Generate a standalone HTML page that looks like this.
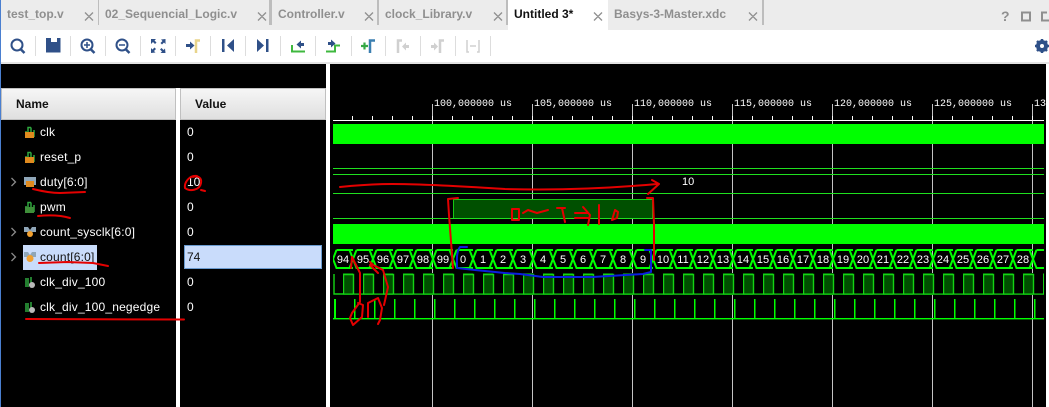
<!DOCTYPE html>
<html><head><meta charset="utf-8"><style>
html,body{margin:0;padding:0;background:#000;width:1049px;height:407px;overflow:hidden}
svg{display:block}
.tab{font:bold 12px "Liberation Sans",sans-serif;fill:#8f8f8f}
.sig{font:12px "Liberation Sans",sans-serif;fill:#fff;letter-spacing:.18px}
.val{font:12px "Liberation Sans",sans-serif;fill:#fff}
.hd{font:bold 12px "Liberation Sans",sans-serif;fill:#111}
.rul{font:10px "Liberation Mono",monospace;fill:#fff}
.c{font:11px "Liberation Sans",sans-serif;fill:#fff;text-anchor:middle}
.x{stroke:#8f8f8f;stroke-width:1.3;fill:none}
.r{fill:none;stroke:#e40000;stroke-width:2;stroke-linecap:round;stroke-linejoin:round}
</style></head><body>
<svg width="1049" height="407" viewBox="0 0 1049 407" xmlns="http://www.w3.org/2000/svg">
<defs>
<linearGradient id="h" x1="0" y1="0" x2="0" y2="1"><stop offset="0" stop-color="#f6f6f6"/><stop offset="1" stop-color="#dfdfdf"/></linearGradient>
<pattern id="hex" patternUnits="userSpaceOnUse" x="333" y="247" width="20" height="24">
<path d="M3.500 3H16.500L23.500 21M-3.500 3L3.500 21H16.500L23.500 3M-3.500 21L3.500 3M16.500 21H23.500M16.500 3H23.500" fill="none" stroke="#0f0" stroke-width="2"/>
</pattern>
<pattern id="clkp" patternUnits="userSpaceOnUse" x="343" y="273" width="20" height="22">
<rect x="0" y="0" width="10" height="22" fill="#004f00"/>
<path d="M.5 21.500V1.500H10.500V21.500" fill="none" stroke="#14d414" stroke-width="1.400"/>
<rect x="0" y="20.500" width="20" height="1.200" fill="#14e014"/>
</pattern>
</defs>

<!-- chrome -->
<rect x="0" y="0" width="1049" height="30" fill="#ececec"/>
<rect x="0" y="30" width="1049" height="32" fill="#fff"/>
<rect x="0" y="62" width="1049" height="2" fill="#e4e4e4"/>
<rect x="508" y="0" width="100" height="30" fill="#fff"/>
<rect x="98" y="0" width="1" height="25" fill="#bdbdbd"/>
<rect x="269" y="0" width="3" height="25" fill="#bdbdbd"/>
<rect x="377" y="0" width="2" height="25" fill="#bdbdbd"/>
<rect x="506" y="0" width="2" height="25" fill="#bdbdbd"/>
<rect x="762" y="0" width="2" height="25" fill="#bdbdbd"/>

<text class="tab" x="7" y="18">test_top.v</text>
<text class="tab" x="105" y="18">02_Sequencial_Logic.v</text>
<text class="tab" x="278" y="18">Controller.v</text>
<text class="tab" x="385" y="18">clock_Library.v</text>
<text class="tab" x="514" y="18" style="fill:#111">Untitled 3*</text>
<text class="tab" x="614" y="18">Basys-3-Master.xdc</text>
<path class="x" d="M85 12.500l8 8m0-8l-8 8M258 12.500l8 8m0-8l-8 8M365 12.500l8 8m0-8l-8 8M494 12.500l8 8m0-8l-8 8M594 12.500l8 8m0-8l-8 8M749 12.500l8 8m0-8l-8 8"/>

<text x="1001" y="21" style="font:bold 14px 'Liberation Sans',sans-serif;fill:#8f8f8f">?</text>
<rect x="1022" y="12.500" width="8" height="8" fill="none" stroke="#8f8f8f" stroke-width="2"/>
<path d="M1047 12.500h-5v8h7" fill="none" stroke="#8f8f8f" stroke-width="2"/>

<!-- toolbar separators -->
<path d="M35.500 36v20M70.500 36v20M105.500 36v20M140.500 36v20M175.500 36v20M210.500 36v20M245.500 36v20M280.500 36v20M315.500 36v20M351.500 36v20M385.500 36v20M420.500 36v20M455.500 36v20M490.500 36v20" stroke="#ddd" stroke-width="1"/>

<!-- toolbar icons -->
<g fill="none" stroke="#2f5088" stroke-width="2">
<circle cx="17" cy="45" r="5.500"/><path d="M21 49.500l3.500 3.500" stroke-width="2.500"/>
<circle cx="87" cy="45" r="5.500"/><path d="M91 49.500l3.500 3.500" stroke-width="2.500"/><path d="M84 45h6M87 42v6" stroke-width="1.500"/>
<circle cx="122" cy="45" r="5.500"/><path d="M126 49.500l3.500 3.500" stroke-width="2.500"/><path d="M119 45h6" stroke-width="1.500"/>
</g>
<path d="M46 38h14.500v14.500H46zM51 38v4h6v-4z" fill="#2f5088" fill-rule="evenodd"/>
<path d="M151 39h5l-1.500 1.500 2 2-1.500 1.500-2-2-2 2zM165.500 39v5l-1.500-1.500-2 2-1.500-1.500 2-2-1.500-1.500zM151 53v-5l1.500 1.500 2-2 1.500 1.500-2 2 1.500 1.500zM165.500 53h-5l1.500-1.500-2-2 1.500-1.500 2 2 1.500-1.500z" fill="#2f5088"/>
<path d="M186 44h4v-2.500l4.500 4-4.500 4V47h-4z" fill="#2f5088"/>
<path d="M196 53V40.500h4" fill="none" stroke="#e8d48a" stroke-width="2.500"/>
<rect x="222" y="39" width="2.500" height="13" fill="#2f5088"/><path d="M234 39v13l-7-6.500z" fill="#2f5088"/>
<rect x="266" y="39" width="2.500" height="13" fill="#2f5088"/><path d="M257 39v13l7-6.500z" fill="#2f5088"/>
<path d="M292 45v6.500h13" fill="none" stroke="#3fb83f" stroke-width="2"/><path d="M304 43h-3v-2.500l-4.500 4 4.500 4V46h3z" fill="#2f5088"/>
<path d="M326 51.500h9v-6h5" fill="none" stroke="#3fb83f" stroke-width="2"/><path d="M328 42h3v-2.500l4.500 4-4.500 4V45h-3z" fill="#2f5088"/>
<path d="M361 46h7M364.500 42.500v7" fill="none" stroke="#35a845" stroke-width="2.200"/>
<path d="M370 53V40.500h5" fill="none" stroke="#3b7fb0" stroke-width="2.500"/>
<path d="M398 53V40.500h4" fill="none" stroke="#d0d0d0" stroke-width="2.500"/><path d="M409 45h-3v-2.500l-4 4 4 4V48h3z" fill="#d0d0d0"/>
<path d="M431 45h3v-2.500l4 4-4 4V48h-3z" fill="#d0d0d0"/><path d="M440 53V40.500h4" fill="none" stroke="#d0d0d0" stroke-width="2.500"/>
<path d="M467 40v12h2M479 40v12h-2M470 46h6" fill="none" stroke="#d0d0d0" stroke-width="1.500"/>
<circle cx="1042" cy="46" r="4.500" fill="none" stroke="#2f5088" stroke-width="3"/>
<path d="M1042 39v14M1035 46h14M1037 41l10 10M1047 41l-10 10" stroke="#2f5088" stroke-width="2.500"/>
<circle cx="1042" cy="46" r="2" fill="#fff"/>

<!-- panel gutters -->
<rect x="0" y="0" width="1" height="407" fill="#4a7fd0"/>
<rect x="176" y="88" width="4" height="319" fill="#fff"/>
<rect x="326" y="64" width="4" height="343" fill="#fff"/>
<rect x="1046" y="64" width="3" height="343" fill="#fff"/>

<!-- headers -->
<rect x="1.500" y="88.500" width="174" height="31" fill="url(#h)" stroke="#c0c0c0"/>
<rect x="180.500" y="88.500" width="145" height="31" fill="url(#h)" stroke="#c0c0c0"/>
<text class="hd" x="16" y="108">Name</text>
<text class="hd" x="195" y="108">Value</text>

<!-- highlight -->
<rect x="23" y="245" width="74" height="25" fill="#c9dcfb"/>
<rect x="184.500" y="245.500" width="137" height="23" fill="#c9dcfb" stroke="#6a9bd0"/>

<!-- signal icons -->
<g fill="none" stroke="#2fa83f" stroke-width="1.500">
<path d="M26 137v-6M31 127.500h-3v9M31 127.500v9M34 137v-7"/>
<path d="M26 162v-6M31 152.500h-3v9M31 152.500v9M34 162v-7"/>
<path d="M26 212v-6M31 202.500h-3v9M31 202.500v9M34 212v-7"/>
<path d="M26 287v-9M28 287v-9M31 277v9"/>
<path d="M26 312v-9M28 312v-9M31 302v9"/>
</g>
<rect x="25" y="132" width="9" height="6" fill="#e08a1e"/>
<rect x="25" y="157" width="9" height="6" fill="#e08a1e"/>
<rect x="25" y="207" width="9" height="6" fill="#3f8f3a"/>
<circle cx="32" cy="285" r="3" fill="#b9b9b9"/>
<circle cx="32" cy="310" r="3" fill="#b9b9b9"/>
<path d="M24 177h12v8h-12z" fill="#8fa6b8"/><rect x="26" y="181" width="8" height="6" fill="#e08a1e"/>
<path d="M24 227h4l2 3 2-3h4v5h-12z" fill="#8fa6b8"/><circle cx="30" cy="234" r="3" fill="#f0a030"/>
<path d="M24 252h4l2 3 2-3h4v5h-12z" fill="#8fa6b8"/><circle cx="30" cy="258.500" r="3.500" fill="#f0a030"/>
<path d="M11.500 178l4 4-4 4M11.500 228l4 4-4 4M11.500 253l4 4-4 4" fill="none" stroke="#8a8a8a" stroke-width="1.300"/>

<!-- names -->
<text class="sig" x="40" y="136">clk</text>
<text class="sig" x="40" y="161">reset_p</text>
<text class="sig" x="40" y="186">duty[6:0]</text>
<text class="sig" x="40" y="211">pwm</text>
<text class="sig" x="40" y="236">count_sysclk[6:0]</text>
<text class="sig" x="40" y="261" style="fill:#111">count[6:0]</text>
<text class="sig" x="40" y="286">clk_div_100</text>
<text class="sig" x="40" y="311">clk_div_100_negedge</text>

<!-- values -->
<text class="val" x="187" y="136">0</text>
<text class="val" x="187" y="161">0</text>
<text class="val" x="187" y="186">10</text>
<text class="val" x="187" y="211">0</text>
<text class="val" x="187" y="236">0</text>
<text class="val" x="187" y="261" style="fill:#111">74</text>
<text class="val" x="187" y="286">0</text>
<text class="val" x="187" y="311">0</text>

<!-- ruler -->
<path d="M432.500 104V407M532.500 104V407M632.500 104V407M732.500 104V407M832.500 104V407M932.500 104V407M1032.500 104V407" stroke="#c4c4c4" stroke-width="1"/>
<rect x="333" y="120" width="711" height="1" fill="#fff"/>
<line x1="352" y1="118" x2="1044" y2="118" stroke="#fff" stroke-width="4" stroke-dasharray="1 19"/>
<text class="rul" x="434" y="106">100,000000 us</text>
<text class="rul" x="534" y="106">105,000000 us</text>
<text class="rul" x="634" y="106">110,000000 us</text>
<text class="rul" x="734" y="106">115,000000 us</text>
<text class="rul" x="834" y="106">120,000000 us</text>
<text class="rul" x="934" y="106">125,000000 us</text>
<text class="rul" x="1034" y="106">13</text>

<!-- waves -->
<rect x="333" y="124" width="711" height="20" fill="#0f0"/>
<rect x="333" y="168" width="711" height="1" fill="#1fe01f"/>
<rect x="333" y="174" width="711" height="1" fill="#1fe01f"/>
<rect x="333" y="193" width="711" height="1" fill="#1fe01f"/>
<text x="682" y="185" style="font:11px 'Liberation Sans',sans-serif;fill:#fff">10</text>
<rect x="333" y="218" width="711" height="1" fill="#1fe01f"/>
<rect x="453" y="199" width="200" height="19" fill="#005000"/>
<path d="M453.500 218V199.500H652.500V218" fill="none" stroke="#14c814" stroke-width="1"/>
<rect x="333" y="224" width="711" height="20" fill="#0f0"/>
<rect x="333" y="247" width="711" height="24" fill="url(#hex)"/>
<rect x="343" y="273" width="701" height="22" fill="url(#clkp)"/>
<path d="M334 274V294H343" fill="none" stroke="#14d414" stroke-width="1.400"/>
<rect x="333" y="318" width="711" height="1.400" fill="#0f0"/>
<rect x="334" y="299" width="2" height="19" fill="#0f0"/>
<line x1="354" y1="308.500" x2="1044" y2="308.500" stroke="#0f0" stroke-width="19" stroke-dasharray="1.500 18.500"/>

<!-- count labels -->
<text class="c" x="343" y="263">94</text><text class="c" x="363" y="263">95</text><text class="c" x="383" y="263">96</text><text class="c" x="403" y="263">97</text><text class="c" x="423" y="263">98</text><text class="c" x="443" y="263">99</text>
<text class="c" x="463" y="263">0</text><text class="c" x="483" y="263">1</text><text class="c" x="503" y="263">2</text><text class="c" x="523" y="263">3</text><text class="c" x="543" y="263">4</text><text class="c" x="563" y="263">5</text><text class="c" x="583" y="263">6</text><text class="c" x="603" y="263">7</text><text class="c" x="623" y="263">8</text><text class="c" x="643" y="263">9</text>
<text class="c" x="663" y="263">10</text><text class="c" x="683" y="263">11</text><text class="c" x="703" y="263">12</text><text class="c" x="723" y="263">13</text><text class="c" x="743" y="263">14</text><text class="c" x="763" y="263">15</text><text class="c" x="783" y="263">16</text><text class="c" x="803" y="263">17</text><text class="c" x="823" y="263">18</text><text class="c" x="843" y="263">19</text><text class="c" x="863" y="263">20</text><text class="c" x="883" y="263">21</text><text class="c" x="903" y="263">22</text><text class="c" x="923" y="263">23</text><text class="c" x="943" y="263">24</text><text class="c" x="963" y="263">25</text><text class="c" x="983" y="263">26</text><text class="c" x="1003" y="263">27</text><text class="c" x="1023" y="263">28</text>

<!-- blue annotation -->
<path d="M467 247L460 247C456 252 457 262 457 268L475 270L505 273L520 274L543 277L593 277L643 274L651 272L651 250L645 250" fill="none" stroke="#0a1ee0" stroke-width="2" stroke-linecap="round" stroke-linejoin="round"/>

<!-- red annotations -->
<path class="r" d="M33 189C45 192 55 193 60 193L85 192"/>
<path class="r" d="M38 216C48 215 60 215 70 218"/>
<path class="r" d="M39 263L67 262L93 263L108 266"/>
<path class="r" d="M26 319L184 319.500"/>
<path class="r" d="M197 176C189 175 184 183 185 188C190 192 200 190 201 183C202 178 198 175 193 177M201 190L205 191"/>
<path class="r" d="M340 187C360 185 375 184 392 184C430 184 470 187 505 189C540 190 590 190 657 184M652 180L659 184L648 194"/>
<path class="r" d="M458 198L448 199L449 215L453 268"/>
<path class="r" d="M647 198L653 198L654 225L654 260"/>
<path class="r" d="M352 257L360 273L360 302L352 313L350 318L353 325L362 317L363 305L358 303"/>
<path class="r" d="M352 257L351 268M370 262L373 265L383 270L388 287L384 305M370 265L378 273"/>
<path class="r" d="M368 317L368 303L378 298L382 308L380 320L378 324"/>
<path class="r" d="M512 209H519V220H512ZM523 213L528 210L537 213L548 210M557 208H565M562 208L565 222M575 213H588M575 218H588M583 207L590 215L588 225M599 205V224M612 220L615 210L618 212L617 218L612 220"/>
</svg>
</body></html>
